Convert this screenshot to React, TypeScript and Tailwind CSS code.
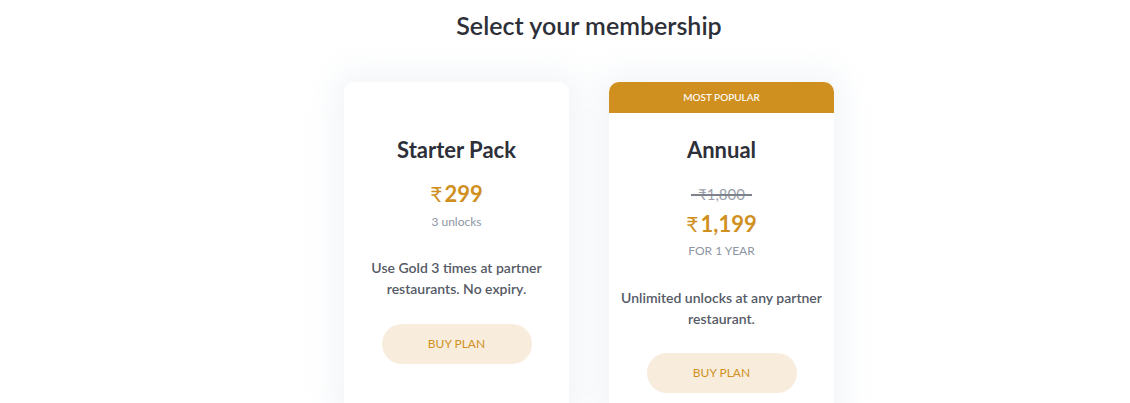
import React from "react";

const font = { fontFamily: 'Lato, "Open Sans", sans-serif' };

function Price({ amount }: { amount: string }) {
  return (
    <div className="flex items-baseline justify-center gap-[2px] text-[#d0901f]">
      <span className="text-[21px] font-normal">₹</span>
      <span className="text-[22px] font-bold">{amount}</span>
    </div>
  );
}

function BuyButton() {
  return (
    <button className="mx-auto flex h-[40px] w-[150px] items-center justify-center rounded-full bg-[#f8eddc] text-[12px] text-[#d0901f]">
      BUY PLAN
    </button>
  );
}

export default function App() {
  return (
    <div className="min-h-[403px] overflow-hidden bg-white text-[#2d3038]" style={font}>
      <div className="flex flex-col items-center pl-[48px]">
        <h1 className="mt-[9px] text-[25px] font-semibold leading-[32px] text-[#2d3038]">
          Select your membership
        </h1>
        <div className="mt-[41px] flex gap-[40px]">
          {/* starter */}
          <div className="h-[340px] w-[225px] rounded-[10px] bg-white pt-[54px] text-center shadow-[0_0_30px_10px_rgba(226,232,240,0.45)]">
            <h2 className="text-[22px] font-bold leading-[28px] text-[#2d3038]">Starter Pack</h2>
            <div className="mt-[13px]">
              <Price amount="299" />
            </div>
            <p className="mt-[3px] text-[12px] text-[#8e96a3]">3 unlocks</p>
            <p className="mx-auto mt-[26px] w-[190px] text-[14px] font-semibold leading-[21px] text-[#555a66]">
              Use Gold 3 times at partner restaurants. No expiry.
            </p>
            <div className="mt-[25px]">
              <BuyButton />
            </div>
          </div>
          {/* annual */}
          <div className="h-[340px] w-[225px] overflow-hidden rounded-[10px] bg-white text-center shadow-[0_0_30px_10px_rgba(226,232,240,0.45)]">
            <div className="flex h-[31px] items-center justify-center bg-[#d0901f] text-[10px] font-medium text-white">
              MOST POPULAR
            </div>
            <h2 className="mt-[23px] text-[22px] font-bold leading-[28px] text-[#2d3038]">Annual</h2>
            <div className="mt-[20px] flex justify-center">
              <span className="relative px-[7px] text-[15px] leading-[20px] text-[#9aa0aa]">
                ₹1,800
                <span className="absolute left-0 right-0 top-[10px] h-[2px] bg-[#7d838c]" />
              </span>
            </div>
            <div className="mt-[3px]">
              <Price amount="1,199" />
            </div>
            <p className="mt-[2px] text-[12px] text-[#8e96a3]">FOR 1 YEAR</p>
            <p className="mx-auto mt-[27px] w-[214px] text-[14px] font-semibold leading-[21px] text-[#555a66]">
              Unlimited unlocks at any partner restaurant.
            </p>
            <div className="mt-[24px]">
              <BuyButton />
            </div>
          </div>
        </div>
      </div>
    </div>
  );
}
